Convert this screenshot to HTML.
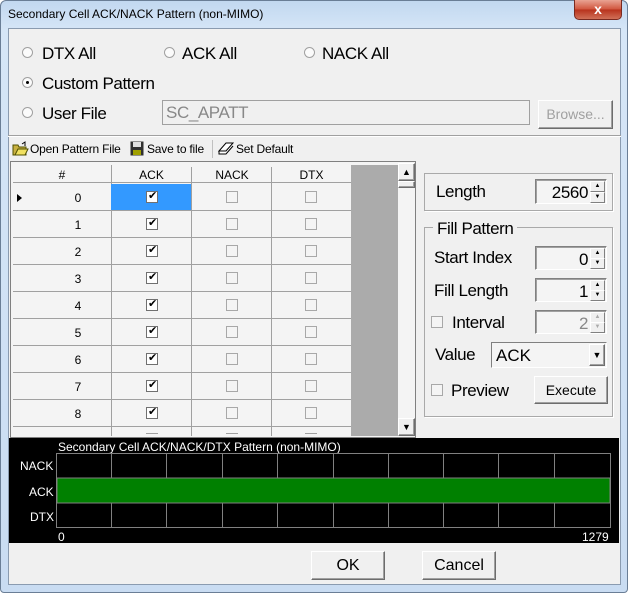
<!DOCTYPE html>
<html><head><meta charset="utf-8"><style>
*{box-sizing:border-box;margin:0;padding:0}
body{width:628px;height:593px;overflow:hidden;background:#fff;font-family:"Liberation Sans",sans-serif;position:relative}
.a{position:absolute}
.frame{left:0;top:0;width:628px;height:593px;background:linear-gradient(#c2d8f0,#d6e6f7 30px,#c9dcf2);border:1px solid #6a7e96;border-radius:6px 6px 4px 4px}
.client{left:8px;top:28px;width:613px;height:557px;background:#f0f0f0;border:1px solid #8a9bb0}
.t17{font-size:17px;color:#000;white-space:nowrap;letter-spacing:-0.4px}
.radio{width:11px;height:11px;border:1px solid #a0a0a0;border-radius:50%;background:#fbfbfb}
.radio.on::after{content:"";position:absolute;left:3px;top:3px;width:3px;height:3px;background:#000;border-radius:50%}
.btn{background:#f0f0f0;border:1px solid;border-color:#fff #6d6d6d #6d6d6d #fff;box-shadow:inset -1px -1px 0 #a0a0a0;text-align:center;font-size:16px}
.spin{background:#f4f4f4;border:1px solid;border-color:#808080 #fff #fff #808080;box-shadow:inset 1px 1px 0 #a0a0a0;font-size:17px;text-align:right;padding-right:18px;padding-top:3px;letter-spacing:-0.4px}
.sb{position:absolute;right:1px;width:15px;height:11px;background:#f0f0f0;border:1px solid;border-color:#fff #808080 #808080 #fff;font-size:6px;line-height:9px;text-align:center;color:#000;letter-spacing:0;padding:0}
.cb{width:12px;height:12px;border:1px solid #a8a8a8;background:#f4f4f4}
.ck{border-color:#707070;background:#fff}
.ck::after{content:"✔";position:absolute;left:1px;top:-3px;font-size:11px;color:#000}
.grp{border:1px solid #a9a9a9;box-shadow:1px 1px 0 #fff}
.gtxt{font-size:12px;color:#000;text-align:center;position:absolute}
.cl{font-size:12px;color:#fff;position:absolute}
</style></head><body>
<div class="a frame"></div>
<div class="a" style="left:8px;top:7px;font-size:12px;color:#000">Secondary Cell ACK/NACK Pattern (non-MIMO)</div>
<div class="a" style="left:574px;top:0;width:48px;height:20px;border:1px solid #7a2a20;border-top:none;border-radius:0 0 5px 5px;background:linear-gradient(#e9a393,#d0543c 50%,#b8321c 51%,#d07058);color:#fff;font-weight:bold;font-size:14px;text-align:center;line-height:18px">x</div>
<div class="a client"></div>

<div class="a radio" style="left:22px;top:47px"></div><div class="a t17" style="left:42px;top:44px">DTX All</div>
<div class="a radio" style="left:164px;top:47px"></div><div class="a t17" style="left:182px;top:44px">ACK All</div>
<div class="a radio" style="left:304px;top:47px"></div><div class="a t17" style="left:322px;top:44px">NACK All</div>
<div class="a radio on" style="left:22px;top:77px"></div><div class="a t17" style="left:42px;top:74px">Custom Pattern</div>
<div class="a radio" style="left:22px;top:107px"></div><div class="a t17" style="left:42px;top:104px">User File</div>
<div class="a" style="left:162px;top:100px;width:368px;height:25px;border:1px solid #a0a0a0;background:#f0f0f0;font-size:17px;color:#888;padding:2px 3px;letter-spacing:-0.4px">SC_APATT</div>
<div class="a btn" style="left:538px;top:100px;width:75px;height:29px;color:#a0a0a0;font-size:14px;line-height:27px">Browse...</div>
<div class="a" style="left:8px;top:135px;width:613px;height:2px;border-top:1px solid #a0a0a0;border-bottom:1px solid #fff"></div>

<svg class="a" style="left:12px;top:141px" width="17" height="15"><path d="M1 4h5l1 2h7v8H1z" fill="#c8b040" stroke="#505000"/><path d="M3 14l3-6h10l-3 6z" fill="#f0e060" stroke="#505000"/><path d="M10 3l3-2v4" fill="none" stroke="#000"/></svg>
<div class="a" style="left:30px;top:142px;font-size:12px;letter-spacing:-0.2px">Open Pattern File</div>
<svg class="a" style="left:130px;top:141px" width="14" height="15"><rect x=".5" y=".5" width="13" height="14" fill="#303030"/><rect x="3" y="1" width="8" height="5" fill="#e0e0e0"/><rect x="3" y="9" width="8" height="5" fill="#a0a000"/></svg>
<div class="a" style="left:147px;top:142px;font-size:12px;letter-spacing:-0.2px">Save to file</div>
<div class="a" style="left:212px;top:140px;width:1px;height:18px;background:#c0c0c0"></div>
<svg class="a" style="left:218px;top:142px" width="16" height="13"><path d="M1 9l7-8h7l-7 8z M1 9v3h7l7-8" fill="#fff" stroke="#000"/></svg>
<div class="a" style="left:236px;top:142px;font-size:12px;letter-spacing:-0.2px">Set Default</div>

<div class="a" style="left:10px;top:161px;width:406px;height:277px;border:1px solid #808080;background:#f4f4f4"></div>
<div class="a" style="left:351px;top:165px;width:47px;height:271px;background:#ababab"></div>
<div class="a" style="left:13px;top:165px;width:338px;height:18px;border-bottom:1px solid #a0a0a0"></div>
<div class="gtxt" style="left:13px;top:168px;width:98px">#</div>
<div class="gtxt" style="left:111px;top:168px;width:81px">ACK</div>
<div class="gtxt" style="left:192px;top:168px;width:80px">NACK</div>
<div class="gtxt" style="left:272px;top:168px;width:79px">DTX</div>
<div class="a" style="left:111px;top:165px;width:1px;height:271px;background:#a0a0a0"></div>
<div class="a" style="left:191px;top:167px;width:1px;height:269px;background:#a0a0a0"></div>
<div class="a" style="left:271px;top:167px;width:1px;height:269px;background:#a0a0a0"></div>
<div class="a" style="left:111px;top:184px;width:80px;height:26px;background:#3399ff"></div>
<div id="rows"></div>
<script>
var h='';for(var i=0;i<10;i++){var y=183+i*27;
h+='<div class="a" style="left:13px;top:'+(y+27)+'px;width:338px;height:1px;background:#a0a0a0"></div>';
if(i<9){h+='<div class="gtxt" style="left:13px;top:'+(y+8)+'px;width:130px">'+i+'</div>';
h+='<div class="a cb ck" style="left:146px;top:'+(y+8)+'px"></div><div class="a cb" style="left:226px;top:'+(y+8)+'px"></div><div class="a cb" style="left:305px;top:'+(y+8)+'px"></div>';}
else{h+='<div class="a" style="left:146px;top:'+(y+7)+'px;width:12px;height:1px;background:#a0a0a0"></div><div class="a" style="left:226px;top:'+(y+7)+'px;width:12px;height:1px;background:#a0a0a0"></div><div class="a" style="left:305px;top:'+(y+7)+'px;width:12px;height:1px;background:#a0a0a0"></div>';}}
document.getElementById('rows').outerHTML=h;
</script>
<div class="a" style="left:17px;top:194px;width:0;height:0;border:4px solid transparent;border-left:5px solid #000"></div>
<div class="a btn" style="left:398px;top:163px;width:17px;height:18px;font-size:9px;line-height:16px">▲</div>
<div class="a btn" style="left:398px;top:181px;width:17px;height:7px"></div>
<div class="a btn" style="left:398px;top:418px;width:17px;height:18px;font-size:9px;line-height:16px">▼</div>

<div class="a grp" style="left:424px;top:173px;width:189px;height:38px"></div>
<div class="a t17" style="left:436px;top:182px">Length</div>
<div class="a spin" style="left:535px;top:179px;width:72px;height:25px">2560<span class="sb" style="top:1px">▲</span><span class="sb" style="top:12px">▼</span></div>
<div class="a grp" style="left:424px;top:227px;width:189px;height:190px"></div>
<div class="a t17" style="left:433px;top:219px;background:#f0f0f0;padding:0 4px">Fill Pattern</div>
<div class="a t17" style="left:434px;top:248px">Start Index</div>
<div class="a spin" style="left:535px;top:246px;width:72px;height:24px">0<span class="sb" style="top:1px">▲</span><span class="sb" style="top:11px">▼</span></div>
<div class="a t17" style="left:434px;top:281px">Fill Length</div>
<div class="a spin" style="left:535px;top:278px;width:72px;height:24px">1<span class="sb" style="top:1px">▲</span><span class="sb" style="top:11px">▼</span></div>
<div class="a cb" style="left:431px;top:316px"></div>
<div class="a t17" style="left:452px;top:313px">Interval</div>
<div class="a spin" style="left:535px;top:310px;width:72px;height:24px;color:#888">2<span class="sb" style="top:1px;color:#aaa">▲</span><span class="sb" style="top:11px;color:#aaa">▼</span></div>
<div class="a t17" style="left:435px;top:345px">Value</div>
<div class="a" style="left:491px;top:342px;width:116px;height:26px;border:1px solid;border-color:#808080 #fff #fff #808080;background:#f4f4f4;font-size:17px;padding:3px 4px">ACK</div>
<div class="a btn" style="left:589px;top:344px;width:16px;height:22px;font-size:9px;line-height:20px">▼</div>
<div class="a cb" style="left:431px;top:384px"></div>
<div class="a t17" style="left:451px;top:381px">Preview</div>
<div class="a btn" style="left:534px;top:376px;width:74px;height:28px;font-size:14px;line-height:26px">Execute</div>

<div class="a" style="left:9px;top:438px;width:610px;height:105px;background:#000"></div>
<div class="cl" style="left:58px;top:440px">Secondary Cell ACK/NACK/DTX Pattern (non-MIMO)</div>
<div class="cl" style="left:20px;top:459px">NACK</div>
<div class="cl" style="left:29px;top:485px">ACK</div>
<div class="cl" style="left:30px;top:510px">DTX</div>
<div class="cl" style="left:58px;top:530px">0</div>
<div class="cl" style="left:582px;top:530px">1279</div>
<svg class="a" style="left:56px;top:453px" width="556" height="76">
<rect x=".5" y=".5" width="554" height="74" fill="none" stroke="#808080"/>
<g stroke="#808080"><path d="M55.5 0v25M110.5 0v25M166.5 0v25M221.5 0v25M277.5 0v25M332.5 0v25M387.5 0v25M442.5 0v25M498.5 0v25"/><path d="M55.5 50v25M110.5 50v25M166.5 50v25M221.5 50v25M277.5 50v25M332.5 50v25M387.5 50v25M442.5 50v25M498.5 50v25"/></g>
<rect x="1" y="25" width="553" height="25" fill="#008000" stroke="#808080"/>
</svg>
<div class="a btn" style="left:311px;top:551px;width:74px;height:29px;line-height:27px">OK</div>
<div class="a btn" style="left:422px;top:551px;width:74px;height:29px;line-height:27px">Cancel</div>
</body></html>
